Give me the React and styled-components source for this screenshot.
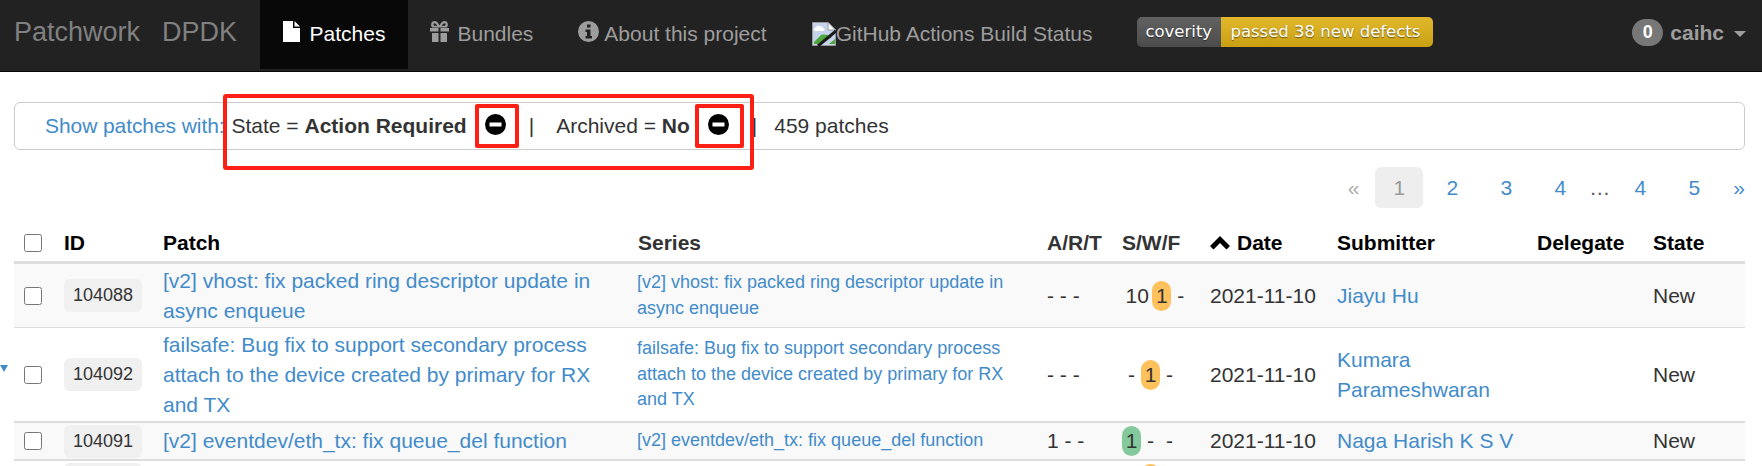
import React from 'react'
import styled, { createGlobalStyle } from 'styled-components'

const GlobalStyle = createGlobalStyle`
  html, body {
    margin: 0;
    background: #fff;
  }
  body {
    font-family: "Liberation Sans", Arial, sans-serif;
    font-size: 21px;
    line-height: 30px;
    color: #333;
  }
  #root {
    height: 466px;
    overflow: hidden;
  }
  a {
    color: #428bca;
    text-decoration: none;
  }
`

const FileIcon = () => (
  <svg width="17" height="21" viewBox="0 0 17 21">
    <path d="M0 0H10V7H17V21H0Z M11.5 0L17 5.5H11.5Z" fill="currentColor" />
  </svg>
)

const GiftIcon = () => (
  <svg width="19" height="21" viewBox="0 0 19 21">
    <path
      fill="currentColor"
      fillRule="evenodd"
      d="M0 7H8.5V10.5H0Z M10.5 7H19V10.5H10.5Z M2 12H8.5V21H2Z M10.5 12H17V21H10.5Z M2 6.5C0 3.5 1.5 0 4.5 0C6.5 0 8.5 2 9.5 4.5C10.5 2 12.5 0 14.5 0C17.5 0 19 3.5 17 6.5Z M4.5 2.2C3.5 2.2 3 3.5 4 4.7H7.2C6.5 3.2 5.5 2.2 4.5 2.2Z M14.5 2.2C13.5 2.2 12.5 3.2 11.8 4.7H15C16 3.5 15.5 2.2 14.5 2.2Z"
    />
  </svg>
)

const InfoIcon = () => (
  <svg width="21" height="21" viewBox="0 0 21 21">
    <path
      fill="currentColor"
      fillRule="evenodd"
      d="M10.5 0A10.5 10.5 0 1 0 10.5 21A10.5 10.5 0 1 0 10.5 0Z M9 3.5H12.5V6.5H9Z M7.5 8.5H12.5V15H14V17.5H7.5V15H9V11H7.5Z"
    />
  </svg>
)

const BrokenImage = () => (
  <svg width="24" height="24" viewBox="0 0 24 24">
    <path d="M0.5 0.5H16L23.5 8V23.5H0.5Z" fill="#c5d4ec" stroke="#9a9a9a" />
    <path d="M16 0.5V8H23.5Z" fill="#fff" stroke="#9a9a9a" />
    <path d="M3 6C5 3 9 3 11 6C13 6 13 9 11 9H4C2 9 1 7 3 6Z" fill="#fff" />
    <path d="M2 20L9 13C13 12 17 13 20 15L8 22H2Z" fill="#4fa83d" />
    <path d="M17 22L23 17V22Z" fill="#4fa83d" />
    <path d="M6 24L24 9" stroke="#1b1b1b" strokeWidth="3" />
  </svg>
)

const MinusSign = () => (
  <svg width="21" height="21" viewBox="0 0 21 21">
    <circle cx="10.5" cy="10.5" r="10.5" fill="#000" />
    <rect x="4.5" y="8.5" width="12" height="4" fill="#fff" />
  </svg>
)

const SortUp = () => (
  <svg width="20" height="14" viewBox="0 0 20 14">
    <path d="M10 0L20 10L16.5 13.5L10 7L3.5 13.5L0 10Z" fill="#000" />
  </svg>
)

const rows = [
  {
    id: '104088',
    title: '[v2] vhost: fix packed ring descriptor update in async enqueue',
    art: '- - -',
    swf: ['10', { w: 1 }, '-'],
    submitter: 'Jiayu Hu',
  },
  {
    id: '104092',
    title: 'failsafe: Bug fix to support secondary process attach to the device created by primary for RX and TX',
    art: '- - -',
    swf: ['-', { w: 1 }, '-'],
    submitter: 'Kumara Parameshwaran',
    marked: true,
  },
  {
    id: '104091',
    title: '[v2] eventdev/eth_tx: fix queue_del function',
    art: '1 - -',
    swf: [{ s: 1 }, '-', '-'],
    submitter: 'Naga Harish K S V',
  },
]

const App = () => {
  return (
    <>
      <GlobalStyle />
      <Navbar>
        <Brand>Patchwork</Brand>
        <Brand $project>DPDK</Brand>
        <NavItem $active><NavIcon $gap={10}><FileIcon /></NavIcon>Patches</NavItem>
        <NavItem><NavIcon $gap={8}><GiftIcon /></NavIcon>Bundles</NavItem>
        <NavItem><NavIcon $gap={5}><InfoIcon /></NavIcon>About this project</NavItem>
        <NavItem><BrokenImage />GitHub Actions Build Status</NavItem>
        <NavItem>
          <Shield>
            <ShieldLabel>coverity</ShieldLabel>
            <ShieldValue>passed 38 new defects</ShieldValue>
          </Shield>
        </NavItem>
        <UserMenu>
          <UserBadge>0</UserBadge>
          <UserName>caihc</UserName>
          <Caret />
        </UserMenu>
      </Navbar>

      <Main>
        <FilterBar>
          <ShowLink>Show patches with:</ShowLink>
          <FilterText $ml={7}>State = <b>Action Required</b></FilterText>
          <RemoveFilter $ml={18}><MinusSign /></RemoveFilter>
          <FilterText $ml={23}>|</FilterText>
          <FilterText $ml={22}>Archived = <b>No</b></FilterText>
          <RemoveFilter $ml={18} $wide><MinusSign /></RemoveFilter>
          <FilterText $ml={23}>|</FilterText>
          <FilterText $ml={17}>459 patches</FilterText>
          <OuterMark />
        </FilterBar>

        <Pagination>
          <PageEdge $side="left">«</PageEdge>
          <PageNumber $current>1</PageNumber>
          <PageNumber>2</PageNumber>
          <PageNumber>3</PageNumber>
          <PageNumber>4</PageNumber>
          <PageGap>…</PageGap>
          <PageNumber>4</PageNumber>
          <PageNumber>5</PageNumber>
          <PageEdge $side="right">»</PageEdge>
        </Pagination>

        <PatchTable>
          <colgroup>
            <Col $w={38} />
            <Col $w={99} />
            <Col $w={475} />
            <Col $w={409} />
            <Col $w={75} />
            <Col $w={88} />
            <Col $w={127} />
            <Col $w={200} />
            <Col $w={116} />
            <Col $w={104} />
          </colgroup>
          <thead>
            <tr>
              <HeadCell><Check type="checkbox" /></HeadCell>
              <HeadCell $dark>ID</HeadCell>
              <HeadCell $dark>Patch</HeadCell>
              <HeadCell>Series</HeadCell>
              <HeadCell>A/R/T</HeadCell>
              <HeadCell>S/W/F</HeadCell>
              <HeadCell $dark><SortArrow><SortUp /></SortArrow>Date</HeadCell>
              <HeadCell $dark>Submitter</HeadCell>
              <HeadCell $dark>Delegate</HeadCell>
              <HeadCell $dark>State</HeadCell>
            </tr>
          </thead>
          <tbody>
            {rows.map((row) => (
              <PatchRow key={row.id}>
                <Cell>
                  {row.marked && <RowMarker />}
                  <Check type="checkbox" />
                </Cell>
                <Cell><PatchId>{row.id}</PatchId></Cell>
                <Cell><a href="#">{row.title}</a></Cell>
                <SeriesCell><a href="#">{row.title}</a></SeriesCell>
                <Cell>{row.art}</Cell>
                <Cell>
                  <Counts>
                    {row.swf.map((v, i) =>
                      typeof v === 'string'
                        ? <Count key={i}>{v}</Count>
                        : <Count key={i} $tone={v.w ? 'warning' : 'success'}>1</Count>
                    )}
                  </Counts>
                </Cell>
                <Cell>2021-11-10</Cell>
                <Cell><a href="#">{row.submitter}</a></Cell>
                <Cell />
                <Cell>New</Cell>
              </PatchRow>
            ))}
            <PatchRow>
              <Cell><Check type="checkbox" /></Cell>
              <Cell><PatchId>&nbsp;</PatchId></Cell>
              <Cell />
              <SeriesCell />
              <Cell />
              <Cell>
                <Counts>
                  <Count>&nbsp;</Count>
                  <Count $tone="warning">&nbsp;</Count>
                  <Count>&nbsp;</Count>
                </Counts>
              </Cell>
              <Cell />
              <Cell />
              <Cell />
              <Cell />
            </PatchRow>
          </tbody>
        </PatchTable>
      </Main>
    </>
  )
}

export default App

const Navbar = styled.nav`
  display: flex;
  align-items: flex-start;
  height: 71px;
  padding-left: 14px;
  padding-right: 16px;
  background: #222;
  border-bottom: 1px solid #080808;
`
const Brand = styled.span`
  font-size: 27px;
  line-height: 65px;
  color: #808080;
  margin-left: ${(p) => (p.$project ? '22px' : '0')};
  margin-right: ${(p) => (p.$project ? '23px' : '0')};
`
const NavItem = styled.div`
  display: flex;
  align-items: center;
  height: 67px;
  padding: 0 22.5px 2px;
  color: ${(p) => (p.$active ? '#fff' : '#9d9d9d')};
  background: ${(p) => (p.$active ? '#080808' : 'transparent')};
  white-space: nowrap;
`
const NavIcon = styled.span`
  display: flex;
  margin-right: ${(p) => p.$gap}px;
  margin-top: -5px;
`
const Shield = styled.div`
  display: flex;
  height: 30px;
  margin-top: -4px;
  border-radius: 5px;
  overflow: hidden;
  font-family: "DejaVu Sans", Verdana, sans-serif;
  font-size: 16.5px;
  line-height: 30px;
  color: #fff;
  text-shadow: 0 1px 1px rgba(1, 1, 1, 0.5);
`
const ShieldLabel = styled.span`
  box-sizing: border-box;
  width: 84px;
  padding-left: 8px;
  background: linear-gradient(#626262, #4b4b4b);
`
const ShieldValue = styled.span`
  box-sizing: border-box;
  width: 212px;
  padding-left: 9px;
  background: linear-gradient(#e2b92c, #c9a012);
`
const UserMenu = styled.div`
  display: flex;
  align-items: center;
  margin-left: auto;
  height: 65px;
  color: #9d9d9d;
`
const UserBadge = styled.span`
  width: 31px;
  height: 27px;
  border-radius: 14px;
  background: #777;
  color: #fff;
  font-size: 18px;
  font-weight: 700;
  line-height: 27px;
  text-align: center;
`
const UserName = styled.span`
  margin-left: 7px;
  font-weight: 700;
`
const Caret = styled.span`
  margin-left: 10px;
  margin-top: 2px;
  border-top: 6px solid #9d9d9d;
  border-left: 6px solid transparent;
  border-right: 6px solid transparent;
`
const Main = styled.main`
  padding: 30px 17px 0 14px;
`
const FilterBar = styled.div`
  position: relative;
  display: flex;
  align-items: center;
  box-sizing: border-box;
  height: 48px;
  padding-left: 30px;
  border: 1px solid #ccc;
  border-radius: 6px;
  white-space: nowrap;
`
const ShowLink = styled.a`
  color: #428bca;
  letter-spacing: -0.08px;
`
const FilterText = styled.span`
  margin-left: ${(p) => p.$ml}px;
`
const RemoveFilter = styled.span`
  position: relative;
  display: flex;
  margin-left: ${(p) => p.$ml}px;
  margin-top: -4px;
  &::after {
    content: "";
    position: absolute;
    top: -10px;
    bottom: -13px;
    left: ${(p) => (p.$wide ? '-13px' : '-10px')};
    right: ${(p) => (p.$wide ? '-15px' : '-13px')};
    border: 4px solid #fb2013;
    border-radius: 2px;
  }
`
const OuterMark = styled.span`
  position: absolute;
  left: 208px;
  top: -9px;
  width: 531px;
  height: 76px;
  box-sizing: border-box;
  border: 4px solid #fb2013;
  border-radius: 3px;
`
const Pagination = styled.div`
  display: flex;
  justify-content: flex-end;
  gap: 6px;
  margin-top: 17px;
  line-height: 41px;
`
const PageNumber = styled.a`
  width: 48px;
  height: 41px;
  text-align: center;
  border-radius: 6px;
  color: ${(p) => (p.$current ? '#999' : '#428bca')};
  background: ${(p) => (p.$current ? '#eee' : 'transparent')};
  margin-right: ${(p) => (p.$current ? '-1px' : '0')};
`
const PageEdge = styled.a`
  color: ${(p) => (p.$side === 'left' ? '#aaa' : '#428bca')};
  margin-right: ${(p) => (p.$side === 'left' ? '10px' : '0')};
  margin-left: ${(p) => (p.$side === 'right' ? '9px' : '0')};
`
const PageGap = styled.span`
  color: #555;
  margin-left: -1px;
`
const PatchTable = styled.table`
  width: 1731px;
  margin-top: 18px;
  table-layout: fixed;
  border-collapse: separate;
  border-spacing: 0;
`
const Col = styled.col`
  width: ${(p) => p.$w}px;
`
const HeadCell = styled.th`
  padding: 2px 0 3px 12px;
  text-align: left;
  font-weight: 700;
  white-space: nowrap;
  color: ${(p) => (p.$dark ? '#000' : '#333')};
  border-bottom: 3px solid #ddd;
  &:first-child {
    padding-left: 10px;
  }
`
const PatchRow = styled.tr`
  &:nth-child(odd) {
    background: #f9f9f9;
  }
  &:nth-child(1) td {
    border-bottom-width: 1px;
  }
`
const Cell = styled.td`
  position: relative;
  padding: 1.5px 0 1.5px 12px;
  vertical-align: middle;
  border-bottom: 2px solid #ddd;
  &:first-child {
    padding-left: 10px;
  }
`
const SeriesCell = styled(Cell)`
  padding-left: 11px;
  padding-right: 20px;
  font-size: 18px;
  line-height: 25.7px;
`
const Check = styled.input`
  display: block;
  width: 18px;
  height: 18px;
  margin: 0;
`
const RowMarker = styled.span`
  position: absolute;
  left: -14px;
  top: 37px;
  border-top: 7px solid #428bca;
  border-left: 4px solid transparent;
  border-right: 4px solid transparent;
`
const PatchId = styled.span`
  display: block;
  width: 78px;
  height: 33px;
  border-radius: 6px;
  background: #f0f0f0;
  font-size: 18px;
  line-height: 33px;
  text-align: center;
`
const Counts = styled.span`
  display: flex;
  align-items: center;
`
const Count = styled.span`
  box-sizing: border-box;
  min-width: 19px;
  padding: 0 3.5px;
  text-align: center;
  border-radius: 10px;
  background: ${(p) =>
    p.$tone === 'warning' ? '#ffc15c' : p.$tone === 'success' ? '#84c99c' : 'transparent'};
`
const SortArrow = styled.span`
  margin-right: 7px;
`
